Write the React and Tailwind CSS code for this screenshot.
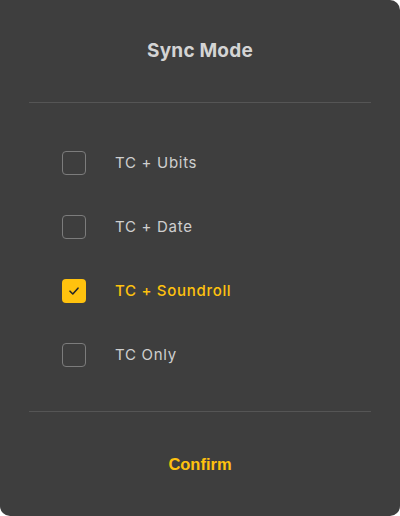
import React, { useState } from 'react';

const options = ['TC + Ubits', 'TC + Date', 'TC + Soundroll', 'TC Only'];

const Check = ({ checked }) => (
    <div
        className={`w-6 h-6 rounded-[4px] flex items-center justify-center ${checked ? 'bg-[#ffc20e]' : 'border-[1.5px] border-[#7c7c7c]'
            }`}
    >
        {checked && (
            <svg width="12" height="12" viewBox="0 0 12 12" fill="none">
                <path d="M2 6.2 L4.8 9 L10 3.2" stroke="#262626" strokeWidth="1.6" strokeLinecap="round" strokeLinejoin="round" />
            </svg>
        )}
    </div>
);

export default function App() {
    const [selected, setSelected] = useState(2);

    return (
        <div className="w-[400px] h-[516px] bg-white">
            <div className="w-full h-full bg-[#3e3e3e] rounded-tr-[10px] rounded-b-[10px] flex flex-col" style={{ fontFamily: 'Inter, "Noto Sans", sans-serif' }}>
                <div className="h-[102px] flex items-center justify-center">
                    <h2 className="text-[19px] font-bold text-[#d4d4d4] tracking-[0.2px] mt-[1px]">Sync Mode</h2>
                </div>
                <div className="mx-[29px] h-px bg-[#555555]" />

                <div className="pt-[28px] pb-[24px] flex flex-col">
                    {options.map((opt, i) => (
                        <button
                            key={opt}
                            onClick={() => setSelected(i)}
                            className="h-16 flex items-center pl-[62px] gap-[29px] text-left"
                        >
                            <Check checked={selected === i} />
                            <span className={`text-[15px] tracking-[0.7px] ${selected === i ? 'text-[#ffc20e] font-medium' : 'text-[#cfcfcf]'}`}>
                                {opt}
                            </span>
                        </button>
                    ))}
                </div>

                <div className="mx-[29px] h-px bg-[#555555]" />
                <div className="flex-1 flex items-center justify-center pt-[1px]">
                    <button className="text-[16.5px] font-bold text-[#ffc20e]" style={{ fontFamily: '"Liberation Sans", Arial, sans-serif' }}>
                        Confirm
                    </button>
                </div>
            </div>
        </div>
    );
}
